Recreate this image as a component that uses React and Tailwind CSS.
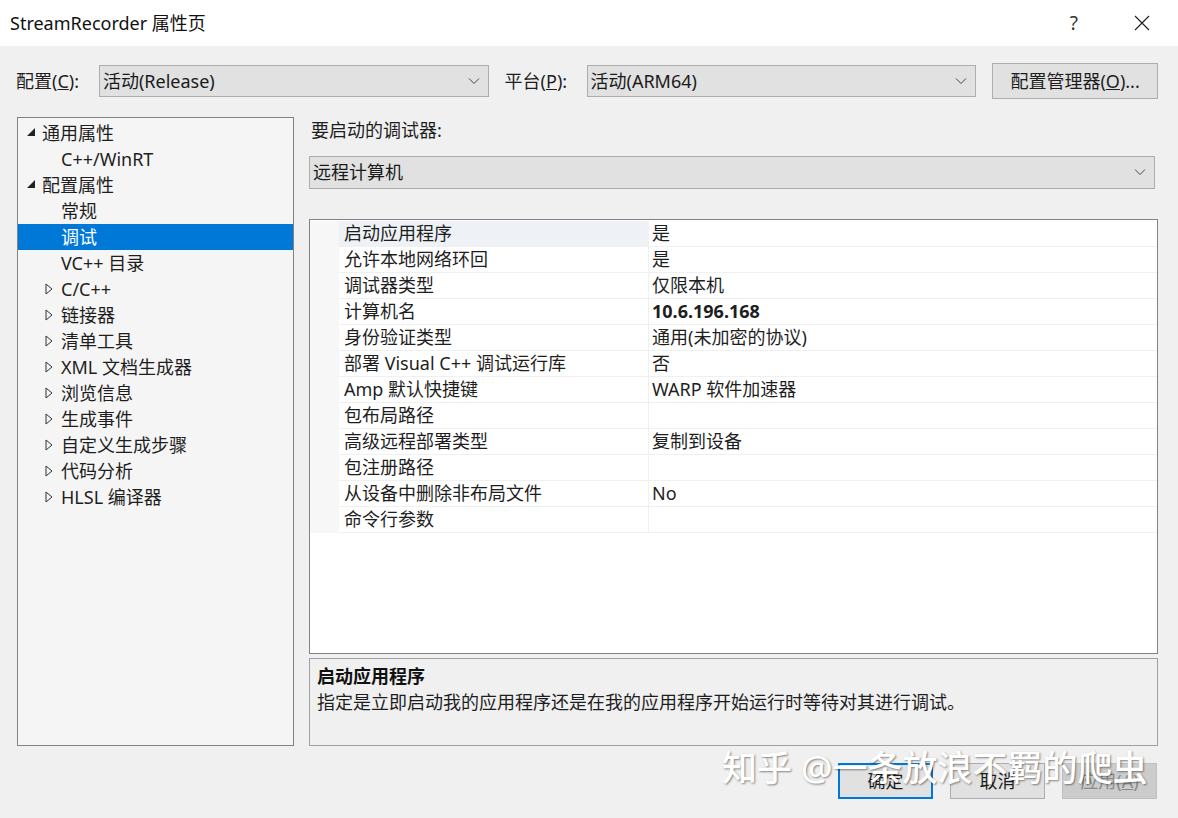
import React from "react";

const FONT = { fontFamily: '"Noto Sans", "Noto Sans CJK SC", sans-serif' };

function Chevron() {
  return (
    <svg width="12" height="8" viewBox="0 0 12 8" className="shrink-0">
      <path d="M1 1.5 L6 6.5 L11 1.5" fill="none" stroke="#444" strokeWidth="1" />
    </svg>
  );
}

function Combo({ text, className }) {
  return (
    <div
      className={
        "flex items-center justify-between border border-[#adadad] bg-[#e1e1e1] pl-[3px] pr-[8px] " +
        className
      }
    >
      <span className="text-[18px] leading-[24px] text-[#1a1a1a]">{text}</span>
      <Chevron />
    </div>
  );
}

function Expanded() {
  return (
    <svg width="10" height="10" viewBox="0 0 10 10" className="shrink-0">
      <path d="M9 1 L9 9 L1 9 Z" fill="#222" />
    </svg>
  );
}

function Collapsed() {
  return (
    <svg width="8" height="12" viewBox="0 0 8 12" className="shrink-0">
      <path d="M1 1 L7 6 L1 11 Z" fill="none" stroke="#333" strokeWidth="1" />
    </svg>
  );
}

const tree = [
  { label: "通用属性", level: 0, kind: "open" },
  { label: "C++/WinRT", level: 1 },
  { label: "配置属性", level: 0, kind: "open" },
  { label: "常规", level: 1 },
  { label: "调试", level: 1, selected: true },
  { label: "VC++ 目录", level: 1 },
  { label: "C/C++", level: 1, kind: "closed" },
  { label: "链接器", level: 1, kind: "closed" },
  { label: "清单工具", level: 1, kind: "closed" },
  { label: "XML 文档生成器", level: 1, kind: "closed" },
  { label: "浏览信息", level: 1, kind: "closed" },
  { label: "生成事件", level: 1, kind: "closed" },
  { label: "自定义生成步骤", level: 1, kind: "closed" },
  { label: "代码分析", level: 1, kind: "closed" },
  { label: "HLSL 编译器", level: 1, kind: "closed" },
];

const props = [
  ["启动应用程序", "是"],
  ["允许本地网络环回", "是"],
  ["调试器类型", "仅限本机"],
  ["计算机名", "10.6.196.168", true],
  ["身份验证类型", "通用(未加密的协议)"],
  ["部署 Visual C++ 调试运行库", "否"],
  ["Amp 默认快捷键", "WARP 软件加速器"],
  ["包布局路径", ""],
  ["高级远程部署类型", "复制到设备"],
  ["包注册路径", ""],
  ["从设备中删除非布局文件", "No"],
  ["命令行参数", ""],
];

function TreeRow({ item }) {
  const sel = item.selected;
  return (
    <div
      className={
        "flex h-[26px] items-center " +
        (sel ? "bg-[#0078d7] text-white" : "text-[#1e1e1e]")
      }
    >
      {item.level === 0 ? (
        <div className="flex w-[24px] justify-end pr-[6px] pb-[2px]">
          <Expanded />
        </div>
      ) : (
        <div className="flex w-[43px] justify-start pl-[27px]">
          {item.kind === "closed" ? <Collapsed /> : null}
        </div>
      )}
      <span className="text-[18px] leading-[24px] whitespace-nowrap">{item.label}</span>
    </div>
  );
}

function Button({ children, className }) {
  return (
    <div
      className={
        "flex h-[36px] w-[95px] items-center justify-center text-[18px] leading-[24px] " + className
      }
    >
      {children}
    </div>
  );
}

export default function App() {
  return (
    <div className="relative h-[818px] w-[1178px] overflow-hidden bg-[#f0f0f0]" style={FONT}>
      {/* title bar */}
      <div className="flex h-[46px] items-center justify-between bg-white pl-[10px] pr-[28px]">
        <span className="text-[18px] leading-[24px] text-[#111]">StreamRecorder 属性页</span>
        <div className="flex items-center gap-[56px]">
          <span className="text-[19px] leading-[24px] text-[#333]">?</span>
          <svg width="16" height="16" viewBox="0 0 16 16">
            <path d="M1 1 L15 15 M15 1 L1 15" stroke="#222" strokeWidth="1.2" />
          </svg>
        </div>
      </div>

      {/* configuration row */}
      <div className="flex h-[70px] items-center pl-[16px] pr-[20px]">
        <span className="w-[83px] text-[18px] leading-[24px] text-[#1e1e1e]">
          配置(<span className="underline">C</span>):
        </span>
        <Combo text="活动(Release)" className="h-[32px] w-[390px]" />
        <span className="ml-[16px] w-[82px] text-[18px] leading-[24px] text-[#1e1e1e]">
          平台(<span className="underline">P</span>):
        </span>
        <Combo text="活动(ARM64)" className="h-[32px] w-[390px]" />
        <div className="ml-[16px] flex h-[36px] w-[166px] items-center justify-center border border-[#adadad] bg-[#e1e1e1] text-[18px] leading-[24px] text-[#1e1e1e]">
          配置管理器(<span className="underline">O</span>)...
        </div>
      </div>

      {/* main area */}
      <div className="flex h-[630px] pl-[17px] pr-[20px]">
        {/* tree */}
        <div className="mt-[1px] w-[278px] border border-[#828282] bg-[#f5f5f5] pt-[2px]">
          {tree.map((t) => (
            <TreeRow key={t.label} item={t} />
          ))}
        </div>

        {/* right side */}
        <div className="ml-[15px] flex flex-1 flex-col">
          <div className="flex h-[40px] items-start pl-[2px] pt-[2px]">
            <span className="text-[18px] leading-[24px] text-[#1e1e1e]">要启动的调试器:</span>
          </div>
          <Combo text="远程计算机" className="h-[33px] w-[846px]" />

          {/* property grid */}
          <div className="mt-[30px] h-[436px] w-[849px] border border-[#828282] bg-white pt-[1px]">
            {props.map(([k, v, bold], i) => (
              <div key={k} className="flex h-[26px]">
                <div className="w-[29px] bg-[#f7f7f7]" />
                <div
                  className={
                    "flex w-[309px] items-center pl-[5px] border-b border-[#f0f0f0] " +
                    (i === 0 ? "bg-[#eef2f6]" : "bg-white")
                  }
                >
                  <span className="text-[18px] leading-[24px] whitespace-nowrap text-[#1e1e1e]">{k}</span>
                </div>
                <div className="flex flex-1 items-center border-b border-l border-[#f0f0f0] pl-[3px]">
                  <span
                    className={
                      "text-[18px] leading-[24px] whitespace-nowrap text-[#1e1e1e] " +
                      (bold ? "font-bold" : "")
                    }
                  >
                    {v}
                  </span>
                </div>
              </div>
            ))}
          </div>

          {/* description */}
          <div className="mt-[4px] h-[88px] w-[849px] border border-[#a0a0a0] bg-[#f0f0f0] pl-[7px] pt-[5px]">
            <div className="text-[18px] font-bold leading-[24px] text-[#111]">启动应用程序</div>
            <div className="mt-[2px] text-[18px] leading-[24px] text-[#1e1e1e]">
              指定是立即启动我的应用程序还是在我的应用程序开始运行时等待对其进行调试。
            </div>
          </div>
        </div>
      </div>

      {/* dialog buttons */}
      <div className="flex justify-end gap-[17px] pr-[21px] pt-[17px]">
        <Button className="border-2 border-[#0078d7] bg-[#e1e1e1] text-[#1e1e1e]">确定</Button>
        <Button className="border border-[#adadad] bg-[#e1e1e1] text-[#1e1e1e]">取消</Button>
        <Button className="border border-[#bfbfbf] bg-[#cccccc] text-[#8a8a8a]">
          应用(<span className="underline">A</span>)
        </Button>
      </div>

      {/* site watermark */}
      <div
        className="pointer-events-none absolute left-[722px] top-[744px] whitespace-nowrap text-[35px] font-medium leading-[48px] text-white"
        style={{ textShadow: "1px 1px 2px rgba(0,0,0,0.45)" }}
      >
        知乎 @一条放浪不羁的爬虫
      </div>
    </div>
  );
}
